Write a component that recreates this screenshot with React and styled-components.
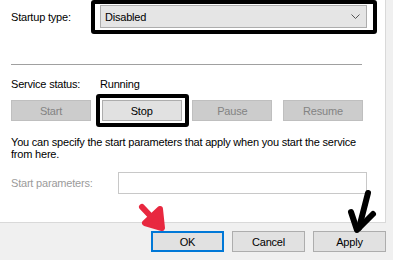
import React from "react";
import styled, { createGlobalStyle } from "styled-components";

const Global = createGlobalStyle`
  html, body { margin: 0; padding: 0; background: #f0f0f0; }
  body { font-family: "Liberation Sans", Arial, sans-serif; }
`;

const Root = styled.div`
  position: relative;
  width: 393px;
  height: 260px;
  overflow: hidden;
  background: #f0f0f0;
  display: flex;
  flex-direction: column;
  font-family: "Liberation Sans", Arial, sans-serif;
  font-size: 11px;
  letter-spacing: -0.2px;
  color: #000;
`;

const Page = styled.div`
  box-sizing: border-box;
  width: 386px;
  height: 223px;
  background: #fff;
  border-right: 1px solid #d9d9d9;
  border-bottom: 1px solid #d9d9d9;
  padding: 5px 18px 0 11px;
  display: flex;
  flex-direction: column;
`;

const FieldRow = styled.div`
  display: grid;
  grid-template-columns: ${(p) => p.$label}px 1fr;
  align-items: center;
  margin-top: ${(p) => p.$top || 0}px;
`;

const Label = styled.span`
  color: ${(p) => (p.$disabled ? "#9b9b9b" : "#000")};
  line-height: 14px;
`;

const Highlight = styled.div`
  position: relative;
  &::after {
    content: "";
    position: absolute;
    top: ${(p) => p.$t}px;
    left: ${(p) => p.$l}px;
    right: ${(p) => p.$r}px;
    bottom: ${(p) => p.$b}px;
    border: 4px solid #000;
    border-radius: 3px;
    pointer-events: none;
  }
`;

const Combo = styled.div`
  box-sizing: border-box;
  height: 23px;
  background: #e5e5e5;
  border: 1px solid #adadad;
  display: flex;
  align-items: center;
  justify-content: space-between;
  padding: 0 6px 0 4px;
`;

const Separator = styled.div`
  width: 351px;
  height: 1px;
  background: #a0a0a0;
  margin-top: 36px;
`;

const StatusRow = styled.div`
  display: grid;
  grid-template-columns: 89px 1fr;
  line-height: 14px;
  margin-top: 12px;
`;

const ButtonRow = styled.div`
  display: grid;
  grid-template-columns: repeat(4, 80px);
  justify-content: space-between;
  width: 352px;
  margin-top: 9px;
`;

const Button = styled.div`
  box-sizing: border-box;
  height: ${(p) => p.$h || 21}px;
  width: ${(p) => (p.$w ? p.$w + "px" : "auto")};
  display: flex;
  align-items: center;
  justify-content: center;
  background: ${(p) => (p.$disabled ? "#cccccc" : "#e1e1e1")};
  border: ${(p) =>
    p.$default ? "2px solid #0078d7" : p.$disabled ? "1px solid #bfbfbf" : "1px solid #adadad"};
  color: ${(p) => (p.$disabled ? "#838383" : "#000")};
`;

const Para = styled.p`
  margin: 15px 0 0;
  line-height: 12px;
  width: 356px;
`;

const Input = styled.div`
  box-sizing: border-box;
  height: 22px;
  background: #fff;
  border: 1px solid #c8c8c8;
`;

const Footer = styled.div`
  display: flex;
  justify-content: flex-end;
  gap: 8px;
  padding: 8px 7px 0 0;
`;

const Overlay = styled.svg`
  position: absolute;
  left: 0;
  top: 0;
  pointer-events: none;
`;

const Chevron = () => (
  <svg width="9" height="5" viewBox="0 0 9 5">
    <path d="M0.5 0.5 L4.5 4.5 L8.5 0.5" fill="none" stroke="#555" strokeWidth="1" />
  </svg>
);

export default function App() {
  return (
    <Root>
      <Global />
      <Page>
        <FieldRow $label={89}>
          <Label>Startup type:</Label>
          <Highlight $t={-5} $l={-9} $r={-10} $b={-6}>
            <Combo>
              <span>Disabled</span>
              <Chevron />
            </Combo>
          </Highlight>
        </FieldRow>
        <Separator />
        <StatusRow>
          <span>Service status:</span>
          <span>Running</span>
        </StatusRow>
        <ButtonRow>
          <Button $disabled>Start</Button>
          <Highlight $t={-6} $l={-6} $r={-7} $b={-6}>
            <Button>Stop</Button>
          </Highlight>
          <Button $disabled>Pause</Button>
          <Button $disabled>Resume</Button>
        </ButtonRow>
        <Para>
          You can specify the start parameters that apply when you start the service
          from here.
        </Para>
        <FieldRow $label={107} $top={12}>
          <Label $disabled>Start parameters:</Label>
          <Input />
        </FieldRow>
      </Page>
      <Footer>
        <Button $default $w={73}>OK</Button>
        <Button $w={73}>Cancel</Button>
        <Button $w={73}>Apply</Button>
      </Footer>
      <Overlay width="393" height="260" viewBox="0 0 393 260">
        <g stroke="#e8283f" strokeWidth="6" strokeLinecap="round" strokeLinejoin="round" fill="#e8283f">
          <path d="M142 207 L159 225" fill="none" />
          <path d="M145 223 L162 228 L160 209 Z" />
        </g>
        <g stroke="#000" strokeWidth="6" strokeLinecap="round" strokeLinejoin="round" fill="none">
          <path d="M368 193 L359 228" />
          <path d="M351 212 L357 230 L373 214" />
        </g>
      </Overlay>
    </Root>
  );
}
